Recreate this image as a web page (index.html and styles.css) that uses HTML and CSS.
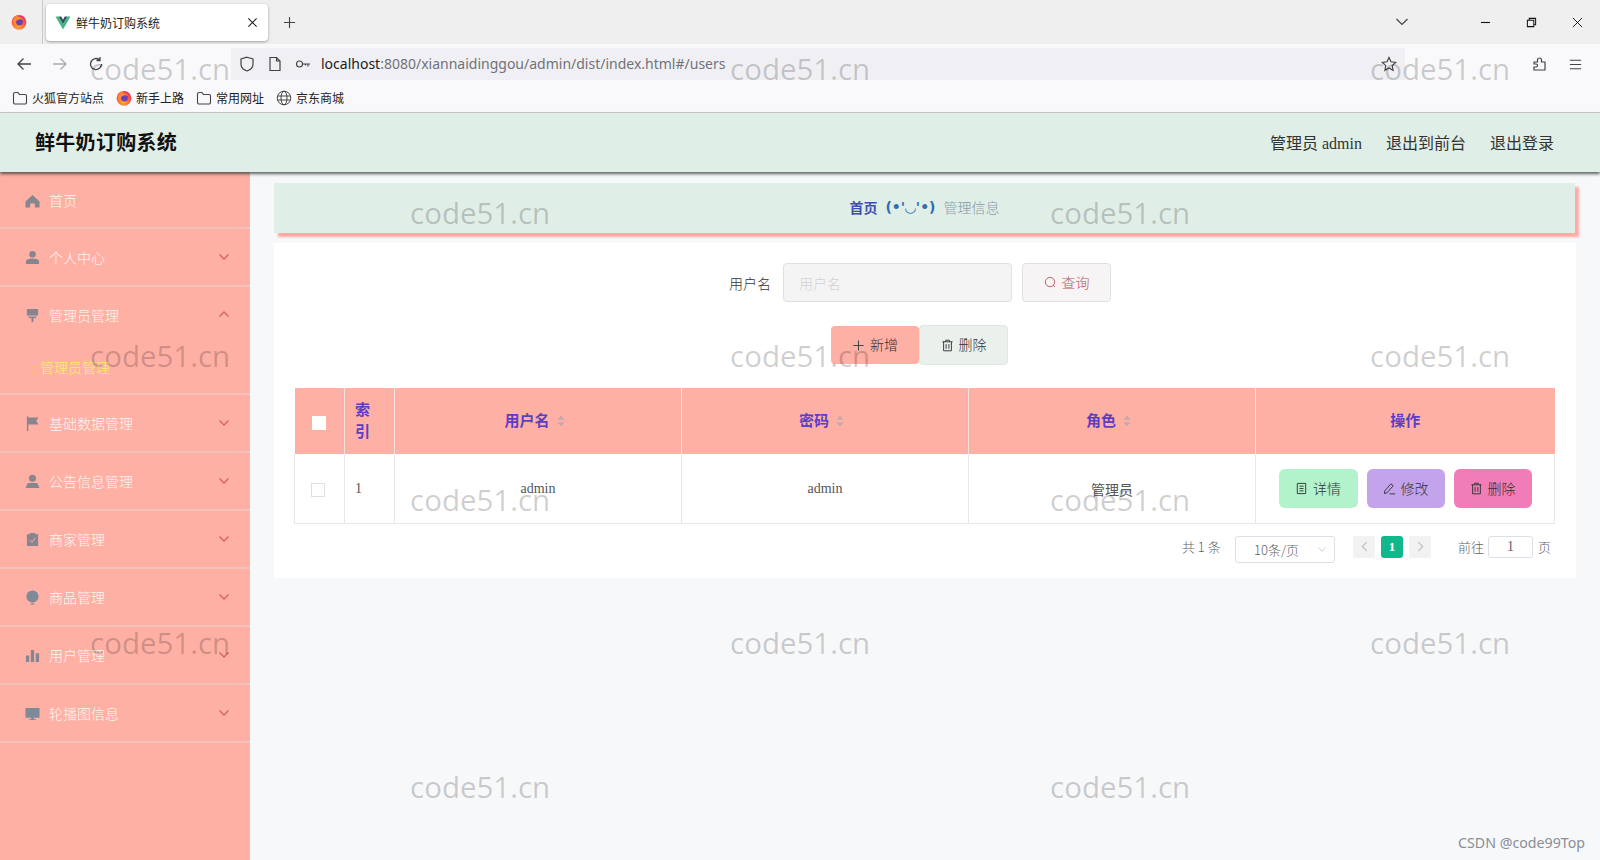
FILE: index.html
```html
<!DOCTYPE html>
<html lang="zh">
<head>
<meta charset="utf-8">
<title>鲜牛奶订购系统</title>
<link rel="stylesheet" href="styles.css">
</head>
<body>
<svg class="defs" width="0" height="0">
  <defs>
    <radialGradient id="fx" cx="0.45" cy="0.75" r="0.8"><stop offset="0" stop-color="#ffb02e"/><stop offset="0.55" stop-color="#ff5a3c"/><stop offset="1" stop-color="#e5286e"/></radialGradient>
    <symbol id="firefox" viewBox="0 0 16 16"><circle cx="8" cy="8.3" r="7.4" fill="url(#fx)"/><circle cx="8.3" cy="8" r="3.6" fill="#6b3fb5"/><path d="M2 6c1-3 3-5 6-5-1 1-1 2-1 2 2 0 4 1 5 3-1-1-3-1-4-.5C6 6 5 7 5 8c0 2 2 4 4 3.500-2 2-7 .5-7-5.500z" fill="#ff8a2e"/></symbol>
    <symbol id="folder" viewBox="0 0 16 16"><path d="M1.500 4a1.500 1.500 0 0 1 1.500-1.500h3l1.500 2H13A1.500 1.500 0 0 1 14.500 6v6.500A1.500 1.500 0 0 1 13 14H3a1.500 1.500 0 0 1-1.500-1.500z" fill="none" stroke="#444" stroke-width="1.100"/></symbol>
    <symbol id="chev" viewBox="0 0 12 8"><path d="M1.500 1.500 6 6l4.500-4.500" fill="none" stroke="#d9605a" stroke-width="1.300"/></symbol>
    <symbol id="trash" viewBox="0 0 14 14"><path d="M1.500 3h11M5 3V1.300h4V3M2.800 3v9.700h8.400V3M5.500 5.500v5M8.500 5.500v5" fill="none" stroke="currentColor" stroke-width="1"/></symbol>
    <symbol id="sort" viewBox="0 0 10 12"><path d="M5 0.500 8.500 4.800h-7zM5 11.500 1.500 7.200h7z" fill="#c3a9ad"/></symbol>
  </defs>
</svg>

<div class="browser">
  <div class="tabstrip">
    <div class="fx-cell"><svg class="ic16"><use href="#firefox"/></svg></div>
    <div class="tab">
      <svg class="ic16" viewBox="0 0 16 16"><path d="M0.500 1.500h3.200L8 9l4.300-7.500h3.200L8 14.500z" fill="#41b883"/><path d="M3.700 1.500h2.500L8 4.700l1.800-3.200h2.500L8 9z" fill="#35495e"/></svg>
      <span class="tab-title">鲜牛奶订购系统</span>
      <svg class="tab-x" viewBox="0 0 12 12"><path d="M1.500 1.500l9 9M10.500 1.500l-9 9" stroke="#222" stroke-width="1.200"/></svg>
    </div>
    <svg class="newtab" viewBox="0 0 14 14"><path d="M7 1v12M1 7h12" stroke="#444" stroke-width="1.200"/></svg>
    <div class="spacer"></div>
    <svg class="tablist" viewBox="0 0 14 10"><path d="M1.500 2 7 7.500 12.500 2" fill="none" stroke="#444" stroke-width="1.200"/></svg>
    <div class="winbtns">
      <svg viewBox="0 0 12 12"><path d="M1 6h10" stroke="#111" stroke-width="1.200"/></svg>
      <svg viewBox="0 0 12 12"><path d="M1.500 3.500h7v7h-7zM3.500 3.500v-2h7v7h-2" fill="none" stroke="#111" stroke-width="1.100"/></svg>
      <svg viewBox="0 0 12 12"><path d="M1 1l10 10M11 1 1 11" stroke="#111" stroke-width="1"/></svg>
    </div>
  </div>
  <div class="toolbar">
    <svg class="nav-ic" viewBox="0 0 16 16"><path d="M15 8H2M7.500 2.500 2 8l5.500 5.500" fill="none" stroke="#444" stroke-width="1.300"/></svg>
    <svg class="nav-ic" viewBox="0 0 16 16"><path d="M1 8h13M8.500 2.500 14 8l-5.500 5.500" fill="none" stroke="#aaa" stroke-width="1.300"/></svg>
    <svg class="nav-ic" viewBox="0 0 16 16"><path d="M13.500 8A5.500 5.500 0 1 1 11.500 3.800M12 1v3.500H8.500" fill="none" stroke="#444" stroke-width="1.300"/></svg>
    <div class="urlbar">
      <svg class="url-ic" viewBox="0 0 16 16"><path d="M8 1.200 14 3v5c0 3.500-3 6-6 7-3-1-6-3.500-6-7V3z" fill="none" stroke="#444" stroke-width="1.200"/></svg>
      <svg class="url-ic" viewBox="0 0 16 16"><path d="M3 1.500h6.500L13 5v9.500H3zM9.500 1.500V5H13" fill="none" stroke="#444" stroke-width="1.200"/></svg>
      <svg class="url-ic" viewBox="0 0 16 16"><circle cx="4.500" cy="8" r="3" fill="none" stroke="#444" stroke-width="1.100"/><path d="M7.500 8H15M13 8v2.500M10.500 8v1.500" fill="none" stroke="#444" stroke-width="1.100"/></svg>
      <span class="url"><b>localhost</b>:8080/xiannaidinggou/admin/dist/index.html#/users</span>
      <div class="spacer"></div>
      <svg class="star" viewBox="0 0 16 16"><path d="M8 1.500l2 4.300 4.700.6-3.500 3.200.9 4.700L8 12l-4.100 2.300.9-4.700L1.300 6.400 6 5.800z" fill="none" stroke="#444" stroke-width="1.200"/></svg>
    </div>
    <svg class="ext" viewBox="0 0 16 16"><path d="M2 6h3.500V4a2 2 0 0 1 4 0v2H13v8H2v-3h2a1.500 1.500 0 0 0 0-3H2z" fill="none" stroke="#444" stroke-width="1.200"/></svg>
    <svg class="menu" viewBox="0 0 16 16"><path d="M2 3.500h12M2 8h12M2 12.500h12" stroke="#444" stroke-width="1.200"/></svg>
  </div>
  <div class="bookmarks">
    <span class="bm"><svg class="ic16"><use href="#folder"/></svg>火狐官方站点</span>
    <span class="bm"><svg class="ic16"><use href="#firefox"/></svg>新手上路</span>
    <span class="bm"><svg class="ic16"><use href="#folder"/></svg>常用网址</span>
    <span class="bm"><svg class="ic16" viewBox="0 0 16 16"><g fill="none" stroke="#444" stroke-width="1"><circle cx="8" cy="8" r="6.800"/><ellipse cx="8" cy="8" rx="3" ry="6.800"/><path d="M1.500 6h13M1.500 10h13"/></g></svg>京东商城</span>
  </div>
</div>

<header class="app-head">
  <div class="brand">鲜牛奶订购系统</div>
  <nav class="head-nav">
    <span>管理员 <i>admin</i></span>
    <span>退出到前台</span>
    <span>退出登录</span>
  </nav>
</header>

<div class="app-body">
  <aside class="side">
    <div class="item first"><svg class="s-ic home" viewBox="0 0 16 16"><path d="M8 1 15.500 8v6.500h-5V10h-5v4.500h-5V8z" fill="#87858f"/></svg>首页</div>
    <div class="item"><svg class="s-ic" viewBox="0 0 16 16"><circle cx="8" cy="4.500" r="3.500" fill="#87858f"/><path d="M1 15v-2.500C1 10 4 9 8 9s7 1 7 3.500V15z" fill="#87858f"/></svg>个人中心<svg class="chev"><use href="#chev"/></svg></div>
    <div class="item open"><svg class="s-ic" viewBox="0 0 16 16"><path d="M2 1h12v7H2zM3 9h10l-2 2H9v4H7v-4H5z" fill="#87858f"/></svg>管理员管理<svg class="chev up"><use href="#chev"/></svg></div>
    <div class="sub">管理员管理</div>
    <div class="item"><svg class="s-ic" viewBox="0 0 16 16"><path d="M2 0.500h1.500V16H2zM3.500 1.500h11L12 5l2.500 4h-11z" fill="#87858f"/></svg>基础数据管理<svg class="chev"><use href="#chev"/></svg></div>
    <div class="item"><svg class="s-ic" viewBox="0 0 16 16"><circle cx="8" cy="4.500" r="3.800" fill="#87858f"/><path d="M0.500 15 3 9.500h10l2.500 5.500z" fill="#87858f"/></svg>公告信息管理<svg class="chev"><use href="#chev"/></svg></div>
    <div class="item"><svg class="s-ic" viewBox="0 0 16 16"><path d="M2 2.500h3V1h6v1.500h3V15H2z" fill="#87858f"/><path d="M5 8.500 7.300 11 11 6.500" fill="none" stroke="#ffb0a5" stroke-width="1"/></svg>商家管理<svg class="chev"><use href="#chev"/></svg></div>
    <div class="item"><svg class="s-ic" viewBox="0 0 16 16"><circle cx="8" cy="7" r="6.500" fill="#7f8a99"/><path d="M6 15h4" stroke="#87858f" stroke-width="1.200"/></svg>商品管理<svg class="chev"><use href="#chev"/></svg></div>
    <div class="item"><svg class="s-ic" viewBox="0 0 16 16"><path d="M1 8h3.500v7H1zM6.200 2h3.500v13H6.200zM11.500 5.500H15V15h-3.500z" fill="#87858f"/></svg>用户管理<svg class="chev"><use href="#chev"/></svg></div>
    <div class="item"><svg class="s-ic" viewBox="0 0 16 16"><path d="M0.500 2h15v10.500H0.500zM6.500 12.500h3V14H12v1H4v-1h2.500z" fill="#7f8a99"/></svg>轮播图信息<svg class="chev"><use href="#chev"/></svg></div>
  </aside>

  <main class="main">
    <div class="crumb">
      <b>首页</b><span class="kao">(•'◡'•)</span><span class="crumb-last">管理信息</span>
    </div>
    <section class="card">
      <div class="search">
        <label>用户名</label>
        <div class="input">用户名</div>
        <button class="btn-q"><svg viewBox="0 0 14 14"><circle cx="6.500" cy="6.500" r="5" fill="none" stroke="#b5565c" stroke-width="1"/><path d="M10 10l1.800 1.800" stroke="#b5565c"/></svg>查询</button>
      </div>
      <div class="actions">
        <button class="btn-add"><svg viewBox="0 0 14 14"><path d="M7 1.500v11M1.500 7h11" stroke="#444" stroke-width="1.100"/></svg>新增</button>
        <button class="btn-del"><svg viewBox="0 0 14 14"><use href="#trash"/></svg>删除</button>
      </div>
      <table class="grid">
        <colgroup>
          <col class="c-check"><col class="c-idx"><col class="c-f"><col class="c-f"><col class="c-f"><col>
        </colgroup>
        <thead>
          <tr>
            <th><span class="cb head"></span></th>
            <th class="left idx">索引</th>
            <th>用户名<svg class="sort"><use href="#sort"/></svg></th>
            <th>密码<svg class="sort"><use href="#sort"/></svg></th>
            <th>角色<svg class="sort"><use href="#sort"/></svg></th>
            <th>操作</th>
          </tr>
        </thead>
        <tbody>
          <tr>
            <td><span class="cb"></span></td>
            <td class="left">1</td>
            <td>admin</td>
            <td>admin</td>
            <td>管理员</td>
            <td>
              <div class="ops">
                <button class="op green"><svg viewBox="0 0 14 14"><path d="M2.500 1.500h9v11h-9zM4.800 4.500h4.400M4.800 7h4.400M4.800 9.500h4.400" fill="none" stroke="currentColor"/></svg>详情</button>
                <button class="op purple"><svg viewBox="0 0 14 14"><path d="M2 9.500 8.500 2l2.500 2-6.500 7.500-3 1zM7 12.800h6" fill="none" stroke="currentColor"/></svg>修改</button>
                <button class="op pink"><svg viewBox="0 0 14 14"><use href="#trash"/></svg>删除</button>
              </div>
            </td>
          </tr>
        </tbody>
      </table>
      <div class="pager">
        <span class="total">共 1 条</span>
        <div class="size">10条/页<svg viewBox="0 0 12 8"><path d="M1.500 1.500 6 6l4.500-4.500" fill="none" stroke="#c0c4cc"/></svg></div>
        <span class="pg"><svg viewBox="0 0 8 12"><path d="M6.500 1 1.500 6l5 5" fill="none" stroke="#b9bcc2" stroke-width="1.300"/></svg></span>
        <span class="pg on">1</span>
        <span class="pg"><svg viewBox="0 0 8 12"><path d="M1.500 1l5 5-5 5" fill="none" stroke="#b9bcc2" stroke-width="1.300"/></svg></span>
        <span class="goto">前往</span>
        <div class="page-in">1</div>
        <span class="goto-end">页</span>
      </div>
    </section>
  </main>
</div>

<div class="wm-layer">
  <div class="wm-row a"><span>code51.cn</span><span>code51.cn</span><span>code51.cn</span></div>
  <div class="wm-row b"><span>code51.cn</span><span>code51.cn</span></div>
  <div class="wm-row a"><span>code51.cn</span><span>code51.cn</span><span>code51.cn</span></div>
  <div class="wm-row b"><span>code51.cn</span><span>code51.cn</span></div>
  <div class="wm-row a"><span>code51.cn</span><span>code51.cn</span><span>code51.cn</span></div>
  <div class="wm-row b"><span>code51.cn</span><span>code51.cn</span></div>
</div>
<div class="csdn">CSDN @code99Top</div>
</body>
</html>
```
FILE: styles.css
```css
* { box-sizing: border-box; }
html, body { margin: 0; height: 860px; overflow: hidden; }
body {
  position: relative;
  background: #f6f8fa;
  font-family: "Liberation Serif", "Noto Sans CJK SC", serif;
  color: #333;
}
.defs { position: absolute; }
.spacer { flex: 1; }
.ic16 { width: 16px; height: 16px; flex: none; }

/* browser chrome */
.browser { font-family: "Noto Sans", "Noto Sans CJK SC", sans-serif; color: #222; }
.tabstrip { height: 44px; background: #efefef; display: flex; align-items: center; }
.fx-cell { width: 43px; height: 44px; display: flex; align-items: center; justify-content: center; border-right: 1px solid #c9c9c9; padding-right: 4px; }
.tab { width: 222px; height: 37px; margin: 1px 0 0 3px; background: #fff; border-radius: 4px; box-shadow: 0 1px 3px rgba(0,0,0,.35); display: flex; align-items: center; padding: 0 10px 0 9px; }
.tab-title { font-size: 12px; margin-left: 5px; flex: 1; }
.tab-x { width: 11px; height: 11px; }
.newtab { width: 13px; height: 13px; margin-left: 15px; }
.tablist { width: 14px; height: 10px; margin-right: 71px; }
.winbtns { display: flex; gap: 35px; margin-right: 17px; }
.winbtns svg { width: 11px; height: 11px; }
.toolbar { height: 40px; background: #f9f9fb; display: flex; align-items: center; padding-left: 16px; }
.nav-ic { width: 16px; height: 16px; margin-right: 20px; }
.urlbar { width: 1174px; height: 32px; margin-left: 107px; background: #f0f0f4; display: flex; align-items: center; padding-left: 8px; }
.url-ic { width: 16px; height: 16px; margin-right: 12px; flex: none; }
.url { font-size: 14px; color: #72727a; white-space: nowrap; margin-left: -2px; position: relative; top: -1px; }
.url b { font-weight: 400; color: #1c1b22; }
.star { width: 16px; height: 16px; margin-right: 8px; }
.ext { width: 16px; height: 16px; margin-left: 127px; }
.menu { width: 15px; height: 15px; margin-left: 20px; }
.bookmarks { height: 29px; background: #f9f9fb; border-bottom: 1px solid #c8c8c8; display: flex; align-items: center; padding-left: 12px; gap: 12px; font-size: 12px; }
.bm { display: inline-flex; align-items: center; gap: 4px; }

/* app header */
.app-head { height: 59px; background: #dfeee6; display: flex; align-items: center; justify-content: space-between; padding: 0 46px 2px 35px; box-shadow: 0 2px 3px rgba(40,50,45,.75); position: relative; z-index: 2; }
.brand { font-size: 20px; font-weight: 700; color: #111; letter-spacing: .3px; }
.head-nav { display: flex; gap: 24px; font-size: 16px; color: #333; }
.head-nav i { font-style: normal; }

/* body layout */
.app-body { display: flex; height: 688px; }
.side { width: 250px; flex: none; background: #ffb0a5; color: rgba(255,255,255,.92); font-size: 14px; font-family: "Noto Sans CJK SC", sans-serif; font-weight: 300; }
.item { height: 58px; border-bottom: 2px solid #f5c2bb; display: flex; align-items: center; padding: 0 20px 0 25px; }
.item.first { height: 57px; }
.item.open { border-bottom: 0; padding-bottom: 2px; }
.s-ic { width: 15px; height: 15px; margin-right: 9px; flex: none; }
.s-ic.home { margin-top: 3px; }
.chev { width: 12px; height: 8px; margin-left: auto; }
.chev.up { transform: rotate(180deg); margin-bottom: 3px; }
.sub { height: 50px; border-bottom: 2px solid #f5c2bb; padding: 12px 0 0 40px; color: #fbf566; }

.main { width: 1302px; margin-left: 24px; padding-top: 11px; }
.crumb { height: 50px; width: 1301px; padding-bottom: 2px; background: #dfeee6; box-shadow: 4px 4px 2px #ffaaa2; display: flex; align-items: center; justify-content: center; font-size: 14px; font-family: "Noto Sans CJK SC", sans-serif; }
.crumb b { color: #3f4fb0; font-size: 14px; }
.kao { color: #2f6fb0; margin: 0 8px; font-family: "DejaVu Sans", sans-serif; font-size: 14px; font-weight: 700; }
.crumb-last { color: #8a9ba8; font-weight: 300; }

.card { margin-top: 10px; height: 335px; background: #fff; padding: 20px 21px 0 20px; font-family: "Liberation Serif", "Noto Sans CJK SC", serif; }
.search { display: flex; align-items: center; justify-content: center; height: 39px; padding-right: 9px; }
.search label { font-size: 14px; color: #333; margin-right: 12px; font-family: "Noto Sans CJK SC", sans-serif; font-weight: 300; }
.input { width: 229px; height: 39px; background: #f5f4f5; border: 1px solid #e0e0e2; border-radius: 4px; display: flex; align-items: center; padding-left: 15px; color: #d3d1d4; font-size: 14px; font-family: "Noto Sans CJK SC", sans-serif; font-weight: 300; }
button { font-family: "Noto Sans CJK SC", sans-serif; font-weight: 300; font-size: 14px; display: inline-flex; align-items: center; justify-content: center; cursor: pointer; padding: 0 0 2px; }
button svg { width: 13px; height: 13px; margin-right: 5px; margin-top: 2px; }
.btn-q { width: 89px; height: 39px; margin-left: 10px; background: #f6f4f5; border: 1px solid #e0e0e2; border-radius: 4px; color: #b5565c; }
.actions { display: flex; justify-content: center; align-items: center; height: 40px; margin-top: 23px; padding-right: 10px; }
.btn-add { width: 88px; height: 38px; background: #ffb0a5; border: 0; border-radius: 4px; color: #333; }
.btn-del { width: 89px; height: 40px; background: #eaf1ec; border: 1px solid #e0e6e2; border-radius: 4px; color: #333; }

.grid { width: 1261px; margin-top: 23px; border-collapse: collapse; table-layout: fixed; font-size: 14px; }
.c-check { width: 50px; }
.c-idx { width: 50px; }
.c-f { width: 287px; }
.grid th { height: 66px; background: #ffb0a5; border-right: 1px solid #ffe2dd; color: #5a3fc4; font-size: 15px; font-weight: 700; padding: 0; text-align: center; line-height: 22px; }
.grid th:last-child { border-right: 0; }
.grid td { height: 69px; border: 1px solid #e8e8ea; border-top: 0; color: #555; padding: 1px 0 0; text-align: center; }
.grid .left { text-align: left; padding-left: 10px; padding-right: 9px; }
.grid th.idx { padding-right: 14px; }
.sort { width: 10px; height: 12px; margin: 0 6px; vertical-align: -1px; }
.cb { display: inline-block; width: 14px; height: 14px; margin-right: 4px; border: 1px solid #dcdfe6; background: #fff; vertical-align: middle; }
.cb.head { border-color: #fff; margin-right: 0; }
.ops { display: flex; justify-content: center; gap: 9px; }
.op { width: 78px; height: 39px; border: 0; border-radius: 6px; color: #333; }
.green { background: #b3f3cb; width: 79px; }
.purple { background: #c3a3ec; }
.pink { background: #f17db8; }

.pager { display: flex; align-items: flex-start; height: 30px; margin-top: 12px; font-size: 13px; color: #606266; font-family: "Noto Sans CJK SC", "Liberation Serif", sans-serif; font-weight: 300; }
.total { margin-left: 888px; line-height: 22px; width: 53px; }
.size { width: 100px; height: 27px; border: 1px solid #dcdfe6; border-radius: 3px; display: flex; align-items: center; padding-left: 18px; }
.size svg { width: 10px; height: 7px; margin-left: auto; margin-right: 7px; }
.pg { width: 22px; height: 22px; background: #f2f2f3; margin-left: 6px; display: flex; align-items: center; justify-content: center; font-size: 13px; border-radius: 2px; }
.pg:nth-of-type(2) { margin-left: 18px; }
.pg svg { width: 7px; height: 11px; }
.pg.on { background: #12b88c; color: #fff; font-weight: 700; font-family: "Liberation Serif", serif; border-radius: 3px; }
.goto { margin-left: 27px; line-height: 22px; width: 30px; }
.page-in { width: 45px; height: 22px; border: 1px solid #dcdfe6; border-radius: 3px; text-align: center; line-height: 20px; font-family: "Liberation Serif", serif; font-size: 14px; }
.goto-end { margin-left: 5px; line-height: 22px; }

/* watermark overlay */
.wm-layer { position: absolute; inset: 0; overflow: hidden; pointer-events: none; z-index: 5; padding-top: 47px; }
.wm-row { height: 143.500px; display: flex; }
.wm-row.a { padding-left: 90px; }
.wm-row.b { padding-left: 410px; }
.wm-row span { width: 640px; flex: none; font-family: "Open Sans", sans-serif; font-size: 29.500px; line-height: 44px; color: rgba(0,0,0,.2); }
.csdn { position: absolute; right: 15px; bottom: 8px; font-size: 14.200px; color: #8a8f94; font-family: "Noto Sans", sans-serif; z-index: 5; }
```
